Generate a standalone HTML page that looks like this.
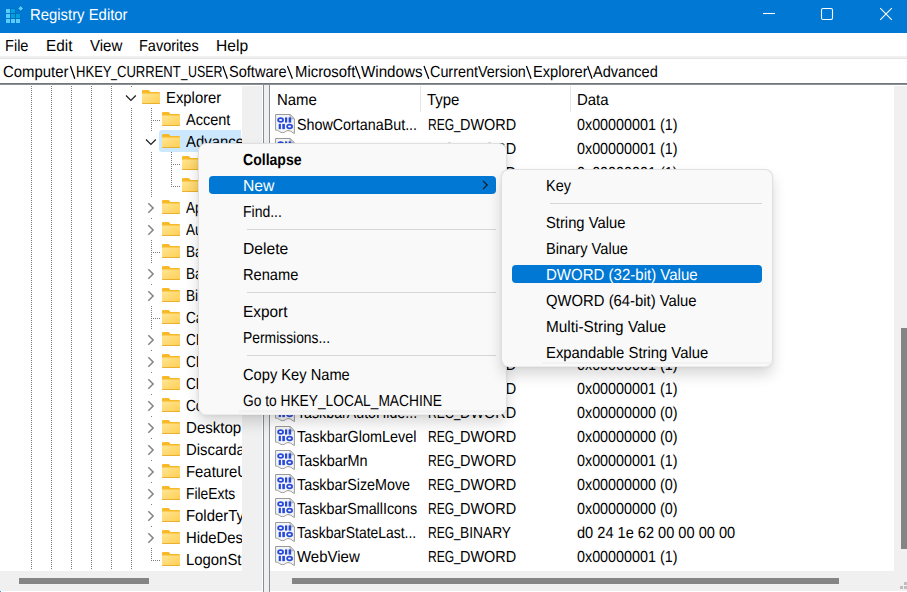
<!DOCTYPE html>
<html><head><meta charset="utf-8"><title>Registry Editor</title>
<style>
html,body{margin:0;padding:0}
body{width:907px;height:592px;overflow:hidden;position:relative;background:#fff;font-family:"Liberation Sans",sans-serif;font-size:16px;color:#000}
.r{position:absolute}
.t{position:absolute;white-space:pre;text-rendering:geometricPrecision;line-height:20px;height:20px;transform-origin:0 50%}
#title{position:absolute;left:0;top:0;width:907px;height:33px;background:#0078d4}
#tree{position:absolute;left:0;top:85px;width:242px;height:486px;overflow:hidden;background:#fff}
#treein{position:absolute;left:0;top:-85px;width:400px;height:592px}
#list{position:absolute;left:270px;top:85px;width:624px;height:486px;overflow:hidden;background:#fff}
#listin{position:absolute;left:-270px;top:-85px;width:907px;height:592px}
.vd{position:absolute;width:1px;background:repeating-linear-gradient(to bottom,#7d7d7d 0,#7d7d7d 1px,transparent 1px,transparent 2px)}
.hd{position:absolute;height:1px;background:repeating-linear-gradient(to right,#7d7d7d 0,#7d7d7d 1px,transparent 1px,transparent 2px)}
.fo,.rv,.ch{position:absolute}
.menu{position:absolute;background:#f9f9f9;border:1px solid #e0e0e0;border-bottom-color:#ececec;border-radius:8px;box-shadow:0 8px 14px rgba(0,0,0,.15),0 1px 3px rgba(0,0,0,.06);box-sizing:border-box}
.hl{position:absolute;background:#0078d4;border-radius:4px}
.sep{position:absolute;height:1px;background:#d6d6d6}
</style></head>
<body>
<svg width="0" height="0" style="position:absolute">
<defs>
<linearGradient id="fg" x1="0" y1="0" x2="1" y2="1"><stop offset="0" stop-color="#FFE594"/><stop offset="1" stop-color="#FFCF52"/></linearGradient>
<g id="fold">
<path d="M0 1.2 Q0 0 1.2 0 H6.2 Q6.9 0 7.4 .6 L8.4 2 H16.9 Q18 2 18 3.1 V13 Q18 14 17 14 H1 Q0 14 0 13 Z" fill="#F7B928"/>
<path d="M0 4 Q0 3.5 .6 3.5 H6.6 L7.6 3.5 H17.4 Q18 3.5 18 4.1 V13 Q18 14 17 14 H1 Q0 14 0 13 Z" fill="url(#fg)"/>
<path d="M0 12.7 V13 Q0 14 1 14 H17 Q18 14 18 13 V12.7 Q18 13.3 17 13.3 H1 Q0 13.3 0 12.7Z" fill="#E5A422"/>
</g>
<g id="regv">
<path d="M.6 .5 H15.0 L19.4 4.8 V19.6 L15.6 17.2 C13.5 16.2 12.3 16.4 10.6 17.6 C8.6 19 6.4 19 4.4 17.4 C3.2 16.4 2 16 .6 16.2 Z" fill="#f4f4f4" stroke="#9a9a9a" stroke-width="1"/>
<path d="M15.0 .5 V4.8 H19.4 Z" fill="#d9d9d9" stroke="#a3a3a3" stroke-width=".8"/>
<g fill="none" stroke="#2749d9" stroke-width="1.75">
<ellipse cx="5.6" cy="6" rx="2.5" ry="1.9"/>
<ellipse cx="14.6" cy="12.5" rx="2.5" ry="1.9"/>
</g>
<g fill="#2749d9">
<rect x="10" y="3.4" width="2.2" height="5.2"/><rect x="13.6" y="3.4" width="2.6" height="5.2"/>
<rect x="3.7" y="9.9" width="2.2" height="5.2"/><rect x="7.3" y="9.9" width="2.6" height="5.2"/>
</g>
</g>
</defs></svg>
<div id="title"></div>
<svg style="position:absolute;left:5px;top:5px" width="19" height="19" viewBox="0 0 19 19">
<rect x="5.5" y="3.5" width="5" height="10" fill="#0068b6"/><rect x="5.5" y="8.5" width="10" height="5" fill="#0068b6"/>
<rect x="0.6" y="3.6" width="14.8" height="14.8" fill="#0070c6" opacity=".0"/>
<rect x="1" y="4" width="4" height="4" fill="#58CCFF"/><rect x="6" y="4" width="4" height="4" fill="#00A3DD"/>
<rect x="1" y="9" width="4" height="4" fill="#58CCFF"/><rect x="6" y="9" width="4" height="4" fill="#00A0DA"/><rect x="11" y="9" width="4" height="4" fill="#00A3DD"/>
<rect x="1" y="14" width="4" height="4" fill="#58CCFF"/><rect x="6" y="14" width="4" height="4" fill="#58CCFF"/><rect x="11" y="14" width="4" height="4" fill="#58CCFF"/>
<path d="M15.7 0.2 L18.9 3.4 L15.7 6.6 L12.5 3.4 Z" fill="#0068b6"/>
<path d="M15.7 1.0 L18.1 3.4 L15.7 5.8 L13.3 3.4 Z" fill="#55D0FF"/>
</svg>
<svg style="position:absolute;left:750px;top:0" width="157" height="33" viewBox="0 0 157 33">
<g stroke="#fff" stroke-width="1.1" fill="none">
<path d="M13 13.5 H25"/>
<rect x="71.5" y="8.5" width="11" height="11" rx="1.6"/>
<path d="M130.2 8.2 L141.8 19.8 M141.8 8.2 L130.2 19.8"/>
</g></svg>
<div class="r" style="left:0;top:56px;width:907px;height:2px;background:#f0f0f0"></div>
<div class="r" style="left:0;top:58px;width:907px;height:1px;background:#e4e4e4"></div>
<div class="r" style="left:0;top:83px;width:907px;height:1px;background:#72777e"></div>
<div class="r" style="left:0;top:84px;width:907px;height:1px;background:#8b9095"></div>
<div class="r" style="left:242px;top:86px;width:20px;height:485px;background:#f0f0f0"></div>
<div class="r" style="left:0;top:571px;width:907px;height:20px;background:#f0f0f0"></div>
<div class="r" style="left:262px;top:85px;width:1px;height:507px;background:#fff"></div>
<div class="r" style="left:263px;top:85px;width:1px;height:507px;background:#8a8f96"></div>
<div class="r" style="left:264px;top:85px;width:5px;height:507px;background:#f0f0f0"></div>
<div class="r" style="left:269px;top:85px;width:1px;height:507px;background:#8a8f96"></div>
<div class="r" style="left:894px;top:86px;width:13px;height:485px;background:#f0f0f0"></div>
<div class="r" style="left:901px;top:328px;width:6px;height:221px;background:#858585"></div>
<div class="r" style="left:19px;top:578px;width:130px;height:6px;background:#858585"></div>
<div class="r" style="left:292px;top:578px;width:547px;height:6px;background:#858585"></div>
<div class="r" style="left:0;top:591px;width:1px;height:1px;background:#3a96dd"></div>
<div class="r" style="left:904px;top:582px;width:3px;height:3px;background:#bdbdbd"></div>
<div class="r" style="left:900px;top:586px;width:3px;height:3px;background:#bdbdbd"></div>
<div class="r" style="left:904px;top:586px;width:3px;height:3px;background:#bdbdbd"></div>
<svg class="r" style="left:0;top:0" width="700" height="90" viewBox="0 0 700 90"><path d="M70.4 66 L74.8 78.8 M222.8 66 L227.3 78.8 M287.4 66 L292.4 78.8 M355.4 66 L360.2 78.8 M424.0 66 L428.8 78.8 M526.4 66 L531.1 78.8 M587.6 66 L592.1 78.8" fill="none" stroke="#000" stroke-width="1.25"/></svg>
<span class="t" style="left:30.02px;top:6.00px;transform:scaleX(0.9298);color:#fff;">Registry Editor</span>
<span class="t" style="left:5.05px;top:37.00px;transform:scaleX(0.9101);">File</span>
<span class="t" style="left:45.98px;top:37.00px;transform:scaleX(0.9569);">Edit</span>
<span class="t" style="left:90.18px;top:37.00px;transform:scaleX(0.9372);">View</span>
<span class="t" style="left:139.25px;top:37.00px;transform:scaleX(0.9065);">Favorites</span>
<span class="t" style="left:216.26px;top:37.00px;transform:scaleX(0.9749);">Help</span>
<span class="t" style="left:3.18px;top:63.00px;transform:scaleX(0.9316);">Computer</span>
<span class="t" style="left:76.48px;top:63.00px;transform:scaleX(0.8168);">HKEY</span>
<span class="t" style="left:111.17px;top:63.00px;transform:scaleX(0.6613);">_</span>
<span class="t" style="left:117.29px;top:63.00px;transform:scaleX(0.8143);">CURRENT</span>
<span class="t" style="left:180.98px;top:63.00px;transform:scaleX(0.7253);">_</span>
<span class="t" style="left:188.23px;top:63.00px;transform:scaleX(0.7764);">USER</span>
<span class="t" style="left:228.62px;top:63.00px;transform:scaleX(0.9103);">Software</span>
<span class="t" style="left:294.62px;top:63.00px;transform:scaleX(0.9294);">Microsoft</span>
<span class="t" style="left:361.28px;top:63.00px;transform:scaleX(0.9479);">Windows</span>
<span class="t" style="left:429.61px;top:63.00px;transform:scaleX(0.8983);">CurrentVersion</span>
<span class="t" style="left:532.54px;top:63.00px;transform:scaleX(0.9158);">Explorer</span>
<span class="t" style="left:593.10px;top:63.00px;transform:scaleX(0.9098);">Advanced</span>
<div id="tree"><div id="treein">
<div class="vd" style="left:31px;top:86px;height:484px"></div>
<div class="vd" style="left:51px;top:86px;height:484px"></div>
<div class="vd" style="left:71px;top:86px;height:484px"></div>
<div class="vd" style="left:91px;top:86px;height:484px"></div>
<div class="vd" style="left:111px;top:86px;height:484px"></div>
<div class="vd" style="left:131px;top:86px;height:2px"></div>
<div class="vd" style="left:131px;top:108px;height:462px"></div>
<div class="vd" style="left:151px;top:108px;height:23px"></div>
<div class="vd" style="left:151px;top:152px;height:45px"></div>
<div class="vd" style="left:151px;top:218px;height:1px"></div>
<div class="vd" style="left:151px;top:240px;height:23px"></div>
<div class="vd" style="left:151px;top:284px;height:1px"></div>
<div class="vd" style="left:151px;top:306px;height:23px"></div>
<div class="vd" style="left:151px;top:350px;height:1px"></div>
<div class="vd" style="left:151px;top:372px;height:1px"></div>
<div class="vd" style="left:151px;top:394px;height:1px"></div>
<div class="vd" style="left:151px;top:416px;height:1px"></div>
<div class="vd" style="left:151px;top:438px;height:1px"></div>
<div class="vd" style="left:151px;top:460px;height:1px"></div>
<div class="vd" style="left:151px;top:482px;height:1px"></div>
<div class="vd" style="left:151px;top:504px;height:1px"></div>
<div class="vd" style="left:151px;top:526px;height:1px"></div>
<div class="vd" style="left:151px;top:548px;height:13px"></div>
<div class="vd" style="left:171px;top:152px;height:35px"></div>
<svg class="ch" style="left:124.9px;top:94.2px" width="12" height="8" viewBox="0 0 12 8"><path d="M1 1.5 L5.9 6.4 L10.8 1.5" fill="none" stroke="#1f1f1f" stroke-width="1.25"/></svg>
<svg class="fo" style="left:142px;top:90px" width="18" height="14" viewBox="0 0 18 14"><use href="#fold"/></svg>
<div class="hd" style="left:151px;top:120px;width:9px"></div>
<svg class="fo" style="left:162px;top:112px" width="18" height="14" viewBox="0 0 18 14"><use href="#fold"/></svg>
<div class="r" style="left:159px;top:130px;width:82px;height:22px;background:#cce8ff;border-radius:3px 0 0 3px"></div>
<svg class="ch" style="left:144.9px;top:138.2px" width="12" height="8" viewBox="0 0 12 8"><path d="M1 1.5 L5.9 6.4 L10.8 1.5" fill="none" stroke="#1f1f1f" stroke-width="1.25"/></svg>
<svg class="fo" style="left:162px;top:134px" width="18" height="14" viewBox="0 0 18 14"><use href="#fold"/></svg>
<div class="hd" style="left:171px;top:164px;width:9px"></div>
<svg class="fo" style="left:182px;top:156px" width="18" height="14" viewBox="0 0 18 14"><use href="#fold"/></svg>
<div class="hd" style="left:171px;top:186px;width:9px"></div>
<svg class="fo" style="left:182px;top:178px" width="18" height="14" viewBox="0 0 18 14"><use href="#fold"/></svg>
<svg class="ch" style="left:147.3px;top:202.3px" width="8" height="12" viewBox="0 0 8 12"><path d="M1.3 1.2 L6.1 6 L1.3 10.8" fill="none" stroke="#838383" stroke-width="1.5"/></svg>
<svg class="fo" style="left:162px;top:200px" width="18" height="14" viewBox="0 0 18 14"><use href="#fold"/></svg>
<svg class="ch" style="left:147.3px;top:224.3px" width="8" height="12" viewBox="0 0 8 12"><path d="M1.3 1.2 L6.1 6 L1.3 10.8" fill="none" stroke="#838383" stroke-width="1.5"/></svg>
<svg class="fo" style="left:162px;top:222px" width="18" height="14" viewBox="0 0 18 14"><use href="#fold"/></svg>
<div class="hd" style="left:151px;top:252px;width:9px"></div>
<svg class="fo" style="left:162px;top:244px" width="18" height="14" viewBox="0 0 18 14"><use href="#fold"/></svg>
<svg class="ch" style="left:147.3px;top:268.3px" width="8" height="12" viewBox="0 0 8 12"><path d="M1.3 1.2 L6.1 6 L1.3 10.8" fill="none" stroke="#838383" stroke-width="1.5"/></svg>
<svg class="fo" style="left:162px;top:266px" width="18" height="14" viewBox="0 0 18 14"><use href="#fold"/></svg>
<svg class="ch" style="left:147.3px;top:290.3px" width="8" height="12" viewBox="0 0 8 12"><path d="M1.3 1.2 L6.1 6 L1.3 10.8" fill="none" stroke="#838383" stroke-width="1.5"/></svg>
<svg class="fo" style="left:162px;top:288px" width="18" height="14" viewBox="0 0 18 14"><use href="#fold"/></svg>
<div class="hd" style="left:151px;top:318px;width:9px"></div>
<svg class="fo" style="left:162px;top:310px" width="18" height="14" viewBox="0 0 18 14"><use href="#fold"/></svg>
<svg class="ch" style="left:147.3px;top:334.3px" width="8" height="12" viewBox="0 0 8 12"><path d="M1.3 1.2 L6.1 6 L1.3 10.8" fill="none" stroke="#838383" stroke-width="1.5"/></svg>
<svg class="fo" style="left:162px;top:332px" width="18" height="14" viewBox="0 0 18 14"><use href="#fold"/></svg>
<svg class="ch" style="left:147.3px;top:356.3px" width="8" height="12" viewBox="0 0 8 12"><path d="M1.3 1.2 L6.1 6 L1.3 10.8" fill="none" stroke="#838383" stroke-width="1.5"/></svg>
<svg class="fo" style="left:162px;top:354px" width="18" height="14" viewBox="0 0 18 14"><use href="#fold"/></svg>
<svg class="ch" style="left:147.3px;top:378.3px" width="8" height="12" viewBox="0 0 8 12"><path d="M1.3 1.2 L6.1 6 L1.3 10.8" fill="none" stroke="#838383" stroke-width="1.5"/></svg>
<svg class="fo" style="left:162px;top:376px" width="18" height="14" viewBox="0 0 18 14"><use href="#fold"/></svg>
<svg class="ch" style="left:147.3px;top:400.3px" width="8" height="12" viewBox="0 0 8 12"><path d="M1.3 1.2 L6.1 6 L1.3 10.8" fill="none" stroke="#838383" stroke-width="1.5"/></svg>
<svg class="fo" style="left:162px;top:398px" width="18" height="14" viewBox="0 0 18 14"><use href="#fold"/></svg>
<svg class="ch" style="left:147.3px;top:422.3px" width="8" height="12" viewBox="0 0 8 12"><path d="M1.3 1.2 L6.1 6 L1.3 10.8" fill="none" stroke="#838383" stroke-width="1.5"/></svg>
<svg class="fo" style="left:162px;top:420px" width="18" height="14" viewBox="0 0 18 14"><use href="#fold"/></svg>
<svg class="ch" style="left:147.3px;top:444.3px" width="8" height="12" viewBox="0 0 8 12"><path d="M1.3 1.2 L6.1 6 L1.3 10.8" fill="none" stroke="#838383" stroke-width="1.5"/></svg>
<svg class="fo" style="left:162px;top:442px" width="18" height="14" viewBox="0 0 18 14"><use href="#fold"/></svg>
<svg class="ch" style="left:147.3px;top:466.3px" width="8" height="12" viewBox="0 0 8 12"><path d="M1.3 1.2 L6.1 6 L1.3 10.8" fill="none" stroke="#838383" stroke-width="1.5"/></svg>
<svg class="fo" style="left:162px;top:464px" width="18" height="14" viewBox="0 0 18 14"><use href="#fold"/></svg>
<svg class="ch" style="left:147.3px;top:488.3px" width="8" height="12" viewBox="0 0 8 12"><path d="M1.3 1.2 L6.1 6 L1.3 10.8" fill="none" stroke="#838383" stroke-width="1.5"/></svg>
<svg class="fo" style="left:162px;top:486px" width="18" height="14" viewBox="0 0 18 14"><use href="#fold"/></svg>
<svg class="ch" style="left:147.3px;top:510.3px" width="8" height="12" viewBox="0 0 8 12"><path d="M1.3 1.2 L6.1 6 L1.3 10.8" fill="none" stroke="#838383" stroke-width="1.5"/></svg>
<svg class="fo" style="left:162px;top:508px" width="18" height="14" viewBox="0 0 18 14"><use href="#fold"/></svg>
<svg class="ch" style="left:147.3px;top:532.3px" width="8" height="12" viewBox="0 0 8 12"><path d="M1.3 1.2 L6.1 6 L1.3 10.8" fill="none" stroke="#838383" stroke-width="1.5"/></svg>
<svg class="fo" style="left:162px;top:530px" width="18" height="14" viewBox="0 0 18 14"><use href="#fold"/></svg>
<div class="hd" style="left:151px;top:560px;width:9px"></div>
<svg class="fo" style="left:162px;top:552px" width="18" height="14" viewBox="0 0 18 14"><use href="#fold"/></svg>
<span class="t" style="left:165.62px;top:89.00px;transform:scaleX(0.9279);">Explorer</span>
<span class="t" style="left:186.30px;top:111.00px;transform:scaleX(0.9067);">Accent</span>
<span class="t" style="left:186.30px;top:133.00px;transform:scaleX(0.9300);">Advanced</span>
<span class="t" style="left:205.62px;top:155.00px;transform:scaleX(0.9300);">People</span>
<span class="t" style="left:205.60px;top:177.00px;transform:scaleX(0.9300);">StartMode</span>
<span class="t" style="left:186.30px;top:199.00px;transform:scaleX(0.8500);">AppContract</span>
<span class="t" style="left:186.30px;top:221.00px;transform:scaleX(0.8500);">AutoplayHandlers</span>
<span class="t" style="left:185.73px;top:243.00px;transform:scaleX(0.8500);">BamThrottling</span>
<span class="t" style="left:185.73px;top:265.00px;transform:scaleX(0.8500);">BannerStore</span>
<span class="t" style="left:185.73px;top:287.00px;transform:scaleX(0.8500);">BitBucket</span>
<span class="t" style="left:185.56px;top:309.00px;transform:scaleX(0.8500);">CabinetState</span>
<span class="t" style="left:185.56px;top:331.00px;transform:scaleX(0.8500);">CIDOpen</span>
<span class="t" style="left:185.56px;top:353.00px;transform:scaleX(0.8500);">CIDSave</span>
<span class="t" style="left:185.56px;top:375.00px;transform:scaleX(0.8500);">CLSID</span>
<span class="t" style="left:185.56px;top:397.00px;transform:scaleX(0.8500);">ComDlg32</span>
<span class="t" style="left:185.61px;top:419.00px;transform:scaleX(0.9413);">Desktop</span>
<span class="t" style="left:185.62px;top:441.00px;transform:scaleX(0.9300);">Discardable</span>
<span class="t" style="left:185.62px;top:463.00px;transform:scaleX(0.9300);">FeatureUsage</span>
<span class="t" style="left:185.71px;top:485.00px;transform:scaleX(0.8655);">FileExts</span>
<span class="t" style="left:185.62px;top:507.00px;transform:scaleX(0.9300);">FolderTypes</span>
<span class="t" style="left:185.62px;top:529.00px;transform:scaleX(0.9300);">HideDesktopIcons</span>
<span class="t" style="left:185.62px;top:551.00px;transform:scaleX(0.9300);">LogonStats</span>
</div></div>
<div id="list"><div id="listin">
<div class="r" style="left:420px;top:86px;width:1px;height:26px;background:#e5e5e5"></div>
<div class="r" style="left:570px;top:86px;width:1px;height:26px;background:#e5e5e5"></div>
<svg class="rv" style="left:275px;top:114px" width="20" height="20" viewBox="0 0 20 20"><use href="#regv"/></svg>
<svg class="rv" style="left:275px;top:138px" width="20" height="20" viewBox="0 0 20 20"><use href="#regv"/></svg>
<svg class="rv" style="left:275px;top:162px" width="20" height="20" viewBox="0 0 20 20"><use href="#regv"/></svg>
<svg class="rv" style="left:275px;top:186px" width="20" height="20" viewBox="0 0 20 20"><use href="#regv"/></svg>
<svg class="rv" style="left:275px;top:210px" width="20" height="20" viewBox="0 0 20 20"><use href="#regv"/></svg>
<svg class="rv" style="left:275px;top:234px" width="20" height="20" viewBox="0 0 20 20"><use href="#regv"/></svg>
<svg class="rv" style="left:275px;top:258px" width="20" height="20" viewBox="0 0 20 20"><use href="#regv"/></svg>
<svg class="rv" style="left:275px;top:282px" width="20" height="20" viewBox="0 0 20 20"><use href="#regv"/></svg>
<svg class="rv" style="left:275px;top:306px" width="20" height="20" viewBox="0 0 20 20"><use href="#regv"/></svg>
<svg class="rv" style="left:275px;top:330px" width="20" height="20" viewBox="0 0 20 20"><use href="#regv"/></svg>
<svg class="rv" style="left:275px;top:354px" width="20" height="20" viewBox="0 0 20 20"><use href="#regv"/></svg>
<svg class="rv" style="left:275px;top:378px" width="20" height="20" viewBox="0 0 20 20"><use href="#regv"/></svg>
<svg class="rv" style="left:275px;top:402px" width="20" height="20" viewBox="0 0 20 20"><use href="#regv"/></svg>
<svg class="rv" style="left:275px;top:426px" width="20" height="20" viewBox="0 0 20 20"><use href="#regv"/></svg>
<svg class="rv" style="left:275px;top:450px" width="20" height="20" viewBox="0 0 20 20"><use href="#regv"/></svg>
<svg class="rv" style="left:275px;top:474px" width="20" height="20" viewBox="0 0 20 20"><use href="#regv"/></svg>
<svg class="rv" style="left:275px;top:498px" width="20" height="20" viewBox="0 0 20 20"><use href="#regv"/></svg>
<svg class="rv" style="left:275px;top:522px" width="20" height="20" viewBox="0 0 20 20"><use href="#regv"/></svg>
<svg class="rv" style="left:275px;top:546px" width="20" height="20" viewBox="0 0 20 20"><use href="#regv"/></svg>
<span class="t" style="left:276.91px;top:91.00px;transform:scaleX(0.9350);">Name</span>
<span class="t" style="left:427.35px;top:91.00px;transform:scaleX(0.9350);">Type</span>
<span class="t" style="left:577.31px;top:91.00px;transform:scaleX(0.9350);">Data</span>
<span class="t" style="left:296.73px;top:116.00px;transform:scaleX(0.8939);">ShowCortanaBut...</span>
<span class="t" style="left:427.76px;top:116.00px;transform:scaleX(0.7533);">REG</span>
<span class="t" style="left:453.88px;top:115.00px;transform:scaleX(0.7147);">_</span>
<span class="t" style="left:460.36px;top:116.00px;transform:scaleX(0.9031);">DWORD</span>
<span class="t" style="left:577.44px;top:116.00px;transform:scaleX(0.8959);">0x00000001 (1)</span>
<span class="t" style="left:427.76px;top:140.00px;transform:scaleX(0.7533);">REG</span>
<span class="t" style="left:453.88px;top:139.00px;transform:scaleX(0.7147);">_</span>
<span class="t" style="left:460.36px;top:140.00px;transform:scaleX(0.9031);">DWORD</span>
<span class="t" style="left:577.44px;top:140.00px;transform:scaleX(0.8959);">0x00000001 (1)</span>
<span class="t" style="left:296.73px;top:164.00px;transform:scaleX(0.8900);">ShowStatusBar</span>
<span class="t" style="left:427.76px;top:164.00px;transform:scaleX(0.7533);">REG</span>
<span class="t" style="left:453.88px;top:163.00px;transform:scaleX(0.7147);">_</span>
<span class="t" style="left:460.36px;top:164.00px;transform:scaleX(0.9031);">DWORD</span>
<span class="t" style="left:577.44px;top:164.00px;transform:scaleX(0.8959);">0x00000001 (1)</span>
<span class="t" style="left:296.73px;top:188.00px;transform:scaleX(0.8900);">ShowSuperHidden</span>
<span class="t" style="left:427.76px;top:188.00px;transform:scaleX(0.7533);">REG</span>
<span class="t" style="left:453.88px;top:187.00px;transform:scaleX(0.7147);">_</span>
<span class="t" style="left:460.36px;top:188.00px;transform:scaleX(0.9031);">DWORD</span>
<span class="t" style="left:577.44px;top:188.00px;transform:scaleX(0.8959);">0x00000000 (0)</span>
<span class="t" style="left:296.73px;top:212.00px;transform:scaleX(0.8900);">ShowTaskViewB...</span>
<span class="t" style="left:427.76px;top:212.00px;transform:scaleX(0.7533);">REG</span>
<span class="t" style="left:453.88px;top:211.00px;transform:scaleX(0.7147);">_</span>
<span class="t" style="left:460.36px;top:212.00px;transform:scaleX(0.9031);">DWORD</span>
<span class="t" style="left:577.44px;top:212.00px;transform:scaleX(0.8959);">0x00000001 (1)</span>
<span class="t" style="left:296.73px;top:236.00px;transform:scaleX(0.8900);">ShowTypeOverlay</span>
<span class="t" style="left:427.76px;top:236.00px;transform:scaleX(0.7533);">REG</span>
<span class="t" style="left:453.88px;top:235.00px;transform:scaleX(0.7147);">_</span>
<span class="t" style="left:460.36px;top:236.00px;transform:scaleX(0.9031);">DWORD</span>
<span class="t" style="left:577.44px;top:236.00px;transform:scaleX(0.8959);">0x00000001 (1)</span>
<span class="t" style="left:296.73px;top:260.00px;transform:scaleX(0.8900);">Start_SearchFiles</span>
<span class="t" style="left:427.76px;top:260.00px;transform:scaleX(0.7533);">REG</span>
<span class="t" style="left:453.88px;top:259.00px;transform:scaleX(0.7147);">_</span>
<span class="t" style="left:460.36px;top:260.00px;transform:scaleX(0.9031);">DWORD</span>
<span class="t" style="left:577.44px;top:260.00px;transform:scaleX(0.8959);">0x00000002 (2)</span>
<span class="t" style="left:296.73px;top:284.00px;transform:scaleX(0.8900);">Start_TrackDocs</span>
<span class="t" style="left:427.76px;top:284.00px;transform:scaleX(0.7533);">REG</span>
<span class="t" style="left:453.88px;top:283.00px;transform:scaleX(0.7147);">_</span>
<span class="t" style="left:460.36px;top:284.00px;transform:scaleX(0.9031);">DWORD</span>
<span class="t" style="left:577.44px;top:284.00px;transform:scaleX(0.8959);">0x00000001 (1)</span>
<span class="t" style="left:296.73px;top:308.00px;transform:scaleX(0.8900);">StartMenuInit</span>
<span class="t" style="left:427.76px;top:308.00px;transform:scaleX(0.7533);">REG</span>
<span class="t" style="left:453.88px;top:307.00px;transform:scaleX(0.7147);">_</span>
<span class="t" style="left:460.36px;top:308.00px;transform:scaleX(0.9031);">DWORD</span>
<span class="t" style="left:577.41px;top:308.00px;transform:scaleX(0.9400);">0x0000000d (13)</span>
<span class="t" style="left:296.73px;top:332.00px;transform:scaleX(0.8900);">StartMigrated...</span>
<span class="t" style="left:427.76px;top:332.00px;transform:scaleX(0.7533);">REG</span>
<span class="t" style="left:453.88px;top:331.00px;transform:scaleX(0.7147);">_</span>
<span class="t" style="left:460.36px;top:332.00px;transform:scaleX(0.9031);">DWORD</span>
<span class="t" style="left:577.44px;top:332.00px;transform:scaleX(0.8959);">0x00000001 (1)</span>
<span class="t" style="left:296.73px;top:356.00px;transform:scaleX(0.8900);">StartShownOn...</span>
<span class="t" style="left:427.76px;top:356.00px;transform:scaleX(0.7533);">REG</span>
<span class="t" style="left:453.88px;top:355.00px;transform:scaleX(0.7147);">_</span>
<span class="t" style="left:460.36px;top:356.00px;transform:scaleX(0.9031);">DWORD</span>
<span class="t" style="left:577.44px;top:356.00px;transform:scaleX(0.8959);">0x00000001 (1)</span>
<span class="t" style="left:297.07px;top:380.00px;transform:scaleX(0.8900);">TaskbarAl</span>
<span class="t" style="left:427.76px;top:380.00px;transform:scaleX(0.7533);">REG</span>
<span class="t" style="left:453.88px;top:379.00px;transform:scaleX(0.7147);">_</span>
<span class="t" style="left:460.36px;top:380.00px;transform:scaleX(0.9031);">DWORD</span>
<span class="t" style="left:577.44px;top:380.00px;transform:scaleX(0.8959);">0x00000001 (1)</span>
<span class="t" style="left:297.07px;top:404.00px;transform:scaleX(0.8885);">TaskbarAutoHide...</span>
<span class="t" style="left:427.76px;top:404.00px;transform:scaleX(0.7533);">REG</span>
<span class="t" style="left:453.88px;top:403.00px;transform:scaleX(0.7147);">_</span>
<span class="t" style="left:460.36px;top:404.00px;transform:scaleX(0.9031);">DWORD</span>
<span class="t" style="left:577.44px;top:404.00px;transform:scaleX(0.8959);">0x00000000 (0)</span>
<span class="t" style="left:297.06px;top:428.00px;transform:scaleX(0.9008);">TaskbarGlomLevel</span>
<span class="t" style="left:427.76px;top:428.00px;transform:scaleX(0.7533);">REG</span>
<span class="t" style="left:453.88px;top:427.00px;transform:scaleX(0.7147);">_</span>
<span class="t" style="left:460.36px;top:428.00px;transform:scaleX(0.9031);">DWORD</span>
<span class="t" style="left:577.44px;top:428.00px;transform:scaleX(0.8959);">0x00000000 (0)</span>
<span class="t" style="left:297.06px;top:452.00px;transform:scaleX(0.9028);">TaskbarMn</span>
<span class="t" style="left:427.76px;top:452.00px;transform:scaleX(0.7533);">REG</span>
<span class="t" style="left:453.88px;top:451.00px;transform:scaleX(0.7147);">_</span>
<span class="t" style="left:460.36px;top:452.00px;transform:scaleX(0.9031);">DWORD</span>
<span class="t" style="left:577.44px;top:452.00px;transform:scaleX(0.8959);">0x00000001 (1)</span>
<span class="t" style="left:297.06px;top:476.00px;transform:scaleX(0.8951);">TaskbarSizeMove</span>
<span class="t" style="left:427.76px;top:476.00px;transform:scaleX(0.7533);">REG</span>
<span class="t" style="left:453.88px;top:475.00px;transform:scaleX(0.7147);">_</span>
<span class="t" style="left:460.36px;top:476.00px;transform:scaleX(0.9031);">DWORD</span>
<span class="t" style="left:577.44px;top:476.00px;transform:scaleX(0.8959);">0x00000000 (0)</span>
<span class="t" style="left:297.06px;top:500.00px;transform:scaleX(0.8952);">TaskbarSmallIcons</span>
<span class="t" style="left:427.76px;top:500.00px;transform:scaleX(0.7533);">REG</span>
<span class="t" style="left:453.88px;top:499.00px;transform:scaleX(0.7147);">_</span>
<span class="t" style="left:460.36px;top:500.00px;transform:scaleX(0.9031);">DWORD</span>
<span class="t" style="left:577.44px;top:500.00px;transform:scaleX(0.8959);">0x00000000 (0)</span>
<span class="t" style="left:297.07px;top:524.00px;transform:scaleX(0.8703);">TaskbarStateLast...</span>
<span class="t" style="left:427.76px;top:524.00px;transform:scaleX(0.7533);">REG</span>
<span class="t" style="left:453.88px;top:523.00px;transform:scaleX(0.7147);">_</span>
<span class="t" style="left:460.42px;top:524.00px;transform:scaleX(0.8609);">BINARY</span>
<span class="t" style="left:577.43px;top:524.00px;transform:scaleX(0.9115);">d0 24 1e 62 00 00 00 00</span>
<span class="t" style="left:297.28px;top:548.00px;transform:scaleX(0.9361);">WebView</span>
<span class="t" style="left:427.76px;top:548.00px;transform:scaleX(0.7533);">REG</span>
<span class="t" style="left:453.88px;top:547.00px;transform:scaleX(0.7147);">_</span>
<span class="t" style="left:460.36px;top:548.00px;transform:scaleX(0.9031);">DWORD</span>
<span class="t" style="left:577.44px;top:548.00px;transform:scaleX(0.8959);">0x00000001 (1)</span>
</div></div>
<div class="menu" style="left:198px;top:143px;width:308.5px;height:272px"></div>
<div class="hl" style="left:209px;top:176px;width:287px;height:18px"></div>
<svg class="r" style="left:481px;top:179px" width="8" height="12" viewBox="0 0 8 12"><path d="M2 1.8 L6.2 6 L2 10.2" fill="none" stroke="#1a1a1a" stroke-width="1.2"/></svg>
<div class="r" style="left:239px;top:410.2px;width:266px;height:2.8px;background:#f2f2f2;border-radius:0 0 5px 0"></div>
<div class="sep" style="left:247px;top:229px;width:249px"></div>
<div class="sep" style="left:247px;top:292px;width:249px"></div>
<div class="sep" style="left:247px;top:355px;width:249px"></div>
<span class="t" style="left:242.75px;top:151.00px;transform:scaleX(0.8779);font-weight:700;">Collapse</span>
<span class="t" style="left:242.55px;top:177.00px;transform:scaleX(0.9796);color:#fff;">New</span>
<span class="t" style="left:242.70px;top:203.00px;transform:scaleX(0.8745);">Find...</span>
<span class="t" style="left:242.55px;top:240.00px;transform:scaleX(0.9790);">Delete</span>
<span class="t" style="left:242.64px;top:266.00px;transform:scaleX(0.9148);">Rename</span>
<span class="t" style="left:242.58px;top:303.00px;transform:scaleX(0.9609);">Export</span>
<span class="t" style="left:242.71px;top:329.00px;transform:scaleX(0.8666);">Permissions...</span>
<span class="t" style="left:242.50px;top:366.00px;transform:scaleX(0.9166);">Copy Key Name</span>
<span class="t" style="left:242.65px;top:392.00px;transform:scaleX(0.8601);">Go to HKEY_LOCAL_MACHINE</span>
<div class="menu" style="left:501px;top:169px;width:272px;height:198px"></div>
<div class="hl" style="left:512px;top:265px;width:250px;height:18px"></div>
<div class="sep" style="left:550px;top:203px;width:212px"></div>
<div class="r" style="left:542px;top:361.6px;width:229.5px;height:2.8px;background:#f2f2f2;border-radius:0 0 5px 0"></div>
<span class="t" style="left:546.16px;top:177.00px;transform:scaleX(0.9033);">Key</span>
<span class="t" style="left:546.11px;top:214.00px;transform:scaleX(0.9231);">String Value</span>
<span class="t" style="left:546.14px;top:240.00px;transform:scaleX(0.9156);">Binary Value</span>
<span class="t" style="left:546.11px;top:266.00px;transform:scaleX(0.9387);color:#fff;">DWORD (32-bit) Value</span>
<span class="t" style="left:546.10px;top:292.00px;transform:scaleX(0.9274);">QWORD (64-bit) Value</span>
<span class="t" style="left:546.08px;top:318.00px;transform:scaleX(0.9593);">Multi-String Value</span>
<span class="t" style="left:546.13px;top:344.00px;transform:scaleX(0.9273);">Expandable String Value</span>
</body></html>
